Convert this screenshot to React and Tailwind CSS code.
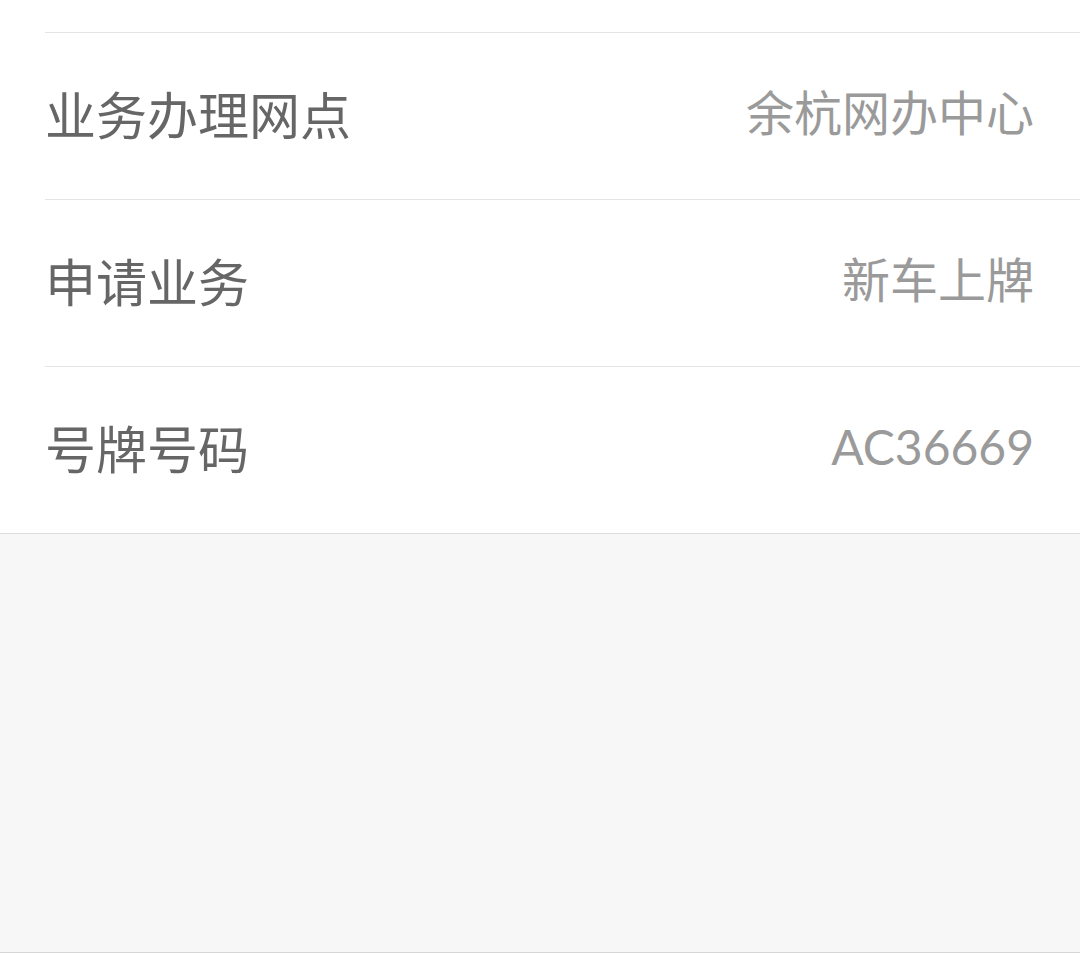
import React from 'react';

const rows = [
  { label: '业务办理网点', value: '余杭网办中心' },
  { label: '申请业务', value: '新车上牌' },
  { label: '号牌号码', value: 'AC36669' },
];

export default function App() {
  return (
    <div
      className="flex h-[953px] w-full flex-col bg-[#f7f7f7]"
      style={{ fontFamily: '"Noto Sans CJK SC", "Noto Sans", sans-serif' }}
    >
      <div className="border-b border-[#dcdcdc] bg-white">
        <div className="h-8" />
        {rows.map((row) => (
          <div
            key={row.label}
            className="ml-[45px] flex h-[167px] items-center justify-between border-t border-[#e5e5e5] pb-[6px] pr-[46px]"
          >
            <span className="text-[51px] leading-none text-[#666666]">{row.label}</span>
            <span className="font-['Lato','Noto_Sans_CJK_SC',sans-serif] text-[48px] leading-none text-[#9a9a9a]">
              {row.value}
            </span>
          </div>
        ))}
      </div>
      <div className="flex-1 border-b border-[#d6d6d6]" />
    </div>
  );
}
